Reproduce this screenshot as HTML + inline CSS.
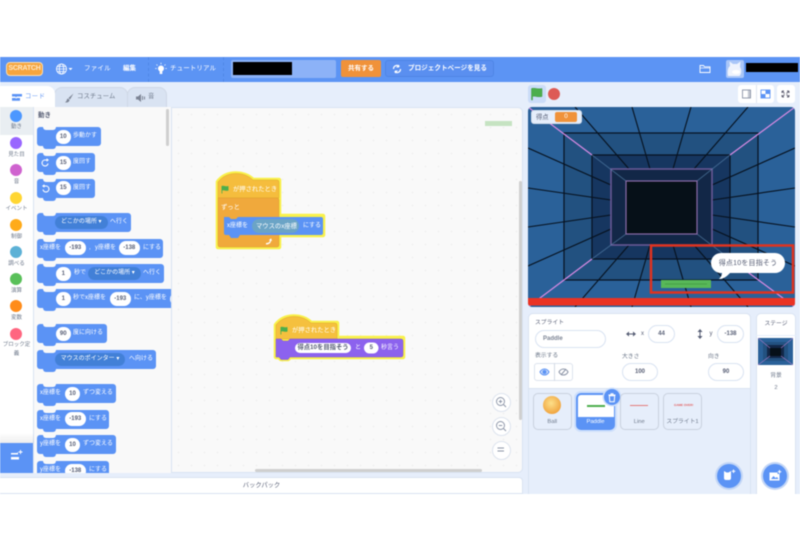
<!DOCTYPE html>
<html lang="ja"><head><meta charset="utf-8"><title>Scratch</title>
<style>
html,body{margin:0;padding:0;width:800px;height:550px;overflow:hidden;background:#fff}
#r{position:relative;width:800px;height:550px;overflow:hidden;font-family:"Liberation Sans","Noto Sans CJK JP",sans-serif;font-size:6px;filter:blur(.5px)}
#r div,#r span.a{position:absolute;box-sizing:border-box}
#r svg{position:absolute;overflow:visible}
.x{color:#fff;height:19px;line-height:19px;white-space:nowrap}
.g{color:#6f7a8c;white-space:nowrap;line-height:9px;height:9px}
.c{text-align:center}
.b{background:#5b93f5;border-radius:3px;height:19px}
.b::before{content:"";position:absolute;left:6px;top:0;width:13px;height:3px;background:#f9f9f9;border-radius:0 0 3px 3px}
.b::after{content:"";position:absolute;left:6px;bottom:-3px;width:13px;height:3px;background:#5b93f5;border-radius:0 0 4px 4px}
.o{background:#fff;color:#575e75;border-radius:7px;height:14px;line-height:14px;text-align:center;white-space:nowrap;font-weight:bold}
.d{background:#4280d7;color:#fff;border-radius:7px;height:13px;line-height:13px;text-align:center;white-space:nowrap}
.i{background:#fff;border:1px solid #d9e3f2;border-radius:9px;color:#575e75;text-align:center;line-height:16px;height:18px;font-weight:bold}
.dot{border-radius:50%;width:12px;height:12px;left:10px}
.s{background:#e6eefb;border:1px solid #c9d1de;border-radius:5px;top:393px;height:37px}
.rb{background:#fff;border:1.5px solid #dde3ee;border-radius:50%;width:19px;height:19px;left:491.5px}
</style></head><body><div id="r">
<!-- page bg -->
<div style="left:0;top:57px;width:800px;height:437px;background:#e6eefb"></div>
<!-- header -->
<div style="left:0;top:57px;width:800px;height:25px;background:#5c94f4"></div>
<div style="left:6px;top:62px;width:37px;height:14px;background:#f6a53e;border:1.5px solid #fcdcae;border-radius:4px;color:#ffe9c8;font-weight:bold;font-size:7px;line-height:11px;text-align:center;letter-spacing:-.2px">SCRATCH</div>
<svg style="left:56px;top:63px" width="20" height="12" viewBox="0 0 20 12"><g fill="none" stroke="#fff" stroke-width=".8"><circle cx="5.500" cy="6" r="5"/><ellipse cx="5.500" cy="6" rx="2.200" ry="5"/><path d="M.5 6h10M1.200 3.500h8.600M1.200 8.500h8.600"/></g><path d="M12.500 5h4l-2 2.200z" fill="#fff"/></svg>
<div class="x" style="left:84px;top:59px;font-size:6.500px;letter-spacing:.2px">ファイル</div>
<div class="x" style="left:123px;top:59px;font-size:6.500px;font-weight:bold">編集</div>
<div style="left:148px;top:57px;width:0;height:25px;border-left:1px dashed #4f87e6"></div>
<div style="left:223px;top:57px;width:0;height:25px;border-left:1px dashed #4f87e6"></div>
<svg style="left:155px;top:62px" width="12" height="14" viewBox="0 0 12 14"><circle cx="6" cy="6.500" r="3" fill="#fff"/><rect x="4.700" y="9" width="2.600" height="3" fill="#fff"/><path d="M6 .8v1.400M1.500 2.500l1 1M10.500 2.500l-1 1M.2 6.500h1.500M10.300 6.500h1.500" stroke="#fff" stroke-width=".8"/></svg>
<div class="x" style="left:170px;top:59px;font-size:6.500px;letter-spacing:.1px">チュートリアル</div>
<div style="left:231px;top:60px;width:105px;height:18px;background:#8cb2f7;border-radius:2px"></div>
<div style="left:233px;top:61.500px;width:59px;height:13px;background:#000"></div>
<div style="left:341px;top:60px;width:40px;height:17px;background:#f0923a;border-radius:2px;color:#fff;text-align:center;line-height:17px;font-size:6.500px;font-weight:bold">共有する</div>
<div style="left:385px;top:60px;width:109px;height:17px;background:#5a8ff0;border:1px solid #4f86e6;border-radius:3px;color:#fff;line-height:15px;font-size:6.600px;padding-left:22px;white-space:nowrap;font-weight:bold">プロジェクトページを見る</div>
<svg style="left:392px;top:64px" width="10" height="10" viewBox="0 0 10 10"><path d="M1.500 5a3.500 3.500 0 0 1 6-2.500M8.500 5a3.500 3.500 0 0 1-6 2.500" fill="none" stroke="#fff" stroke-width="1.200"/><path d="M7 .5v3h-3zM3 9.500v-3h3z" fill="#fff"/></svg>
<svg style="left:699px;top:64px" width="12" height="10" viewBox="0 0 12 10"><path d="M1 8.500V1.500h3.500l1 1.300H11v5.700z" fill="none" stroke="#fff" stroke-width=".9"/><path d="M1 4h10" stroke="#fff" stroke-width=".7"/></svg>
<div style="left:726px;top:60px;width:18px;height:18px;background:#a9c6f8;border-radius:2px"></div>
<svg style="left:726px;top:60px" width="18" height="18" viewBox="0 0 18 18"><path d="M2 16C1 10 2.500 7 4 6L3.500 1.500 7 4h4l3.500-2.500L14 7c2 3 1.500 7-.5 9z" fill="#eef3fd"/><ellipse cx="10" cy="12" rx="4" ry="2" fill="#fff"/></svg>
<div style="left:746px;top:63px;width:52px;height:9px;background:#000"></div>

<!-- tabs -->
<div style="left:54px;top:87px;width:74px;height:20px;background:#d9e3f2;border:1px solid #cfd8e6;border-bottom:0;border-radius:8px 8px 0 0"></div>
<div style="left:127px;top:87px;width:40px;height:20px;background:#d9e3f2;border:1px solid #cfd8e6;border-bottom:0;border-radius:8px 8px 0 0"></div>
<div style="left:0;top:86px;width:55px;height:22px;background:#fff;border-radius:0 8px 0 0"></div>
<svg style="left:12px;top:94px" width="10" height="7" viewBox="0 0 10 7"><path d="M0 0h10v2.500H5L4 3.300 3 2.500H0zM0 4h3.500l.7.700.8-.7H8v2.800H0z" fill="#5b93f5"/></svg>
<div class="g" style="left:25px;top:92px;color:#6a9cf5;font-size:6.300px;letter-spacing:.5px">コード</div>
<svg style="left:65px;top:93px" width="9" height="10" viewBox="0 0 9 10"><path d="M8.500.5 3.500 5 5 6.500zM3 5.500C1.500 6 2.200 8 0 9.500c3 .3 4.500-1 4.500-2.500z" fill="#7d8595"/></svg>
<div class="g" style="left:77px;top:92px;font-size:6.300px;letter-spacing:.15px">コスチューム</div>
<svg style="left:136px;top:94px" width="10" height="8" viewBox="0 0 10 8"><path d="M0 2.500h2L5 0v8L2 5.500H0z" fill="#7d8595"/><path d="M6.500 2v4M8.500 2.500v3" stroke="#7d8595" stroke-width="1"/></svg>
<div class="g" style="left:148px;top:92px;font-size:6.300px">音</div>

<!-- category column -->
<div style="left:0;top:107px;width:34px;height:366px;background:#fff;border-right:1px solid #d9e3f2"></div>
<div style="left:0;top:107px;width:33px;height:28px;background:#e9eef2"></div>
<div class="dot" style="top:110px;background:#4c97ff"></div><div class="g c" style="left:0;width:33px;top:122.500px;font-size:5.500px">動き</div>
<div class="dot" style="top:137px;background:#9966ff"></div><div class="g c" style="left:0;width:33px;top:150.500px;font-size:5.500px">見た目</div>
<div class="dot" style="top:164px;background:#cf63cf"></div><div class="g c" style="left:0;width:33px;top:177.500px;font-size:5.500px">音</div>
<div class="dot" style="top:191.500px;background:#ffd633"></div><div class="g c" style="left:0;width:33px;top:204.500px;font-size:5.500px">イベント</div>
<div class="dot" style="top:219px;background:#ffab19"></div><div class="g c" style="left:0;width:33px;top:232.500px;font-size:5.500px">制御</div>
<div class="dot" style="top:246px;background:#5cb1d6"></div><div class="g c" style="left:0;width:33px;top:259.500px;font-size:5.500px">調べる</div>
<div class="dot" style="top:273px;background:#59c059"></div><div class="g c" style="left:0;width:33px;top:286.500px;font-size:5.500px">演算</div>
<div class="dot" style="top:300px;background:#ff8c1a"></div><div class="g c" style="left:0;width:33px;top:313.500px;font-size:5.500px">変数</div>
<div class="dot" style="top:328px;background:#ff6680"></div><div class="g c" style="left:0;width:33px;top:340.500px;font-size:5.500px">ブロック定</div><div class="g c" style="left:0;width:33px;top:349.500px;font-size:5.500px">義</div>
<div style="left:0;top:433px;width:34px;height:10px;background:linear-gradient(rgba(0,0,0,0),rgba(0,0,0,.07))"></div>
<div style="left:0;top:443px;width:33px;height:30px;background:#5b93f5"></div>
<svg style="left:9px;top:449px" width="15" height="14" viewBox="0 0 15 14"><path d="M2 4h6l1-1v2.500H2zM2 8h8v2.500H2z" fill="#fff"/><path d="M11.500 1v4M9.500 3h4" stroke="#fff" stroke-width="1"/></svg>

<!-- palette background -->
<div style="left:34px;top:107px;width:138px;height:366px;background:#f9f9f9;border-right:1px solid #d9e3f2"></div>
<div style="left:166px;top:109px;width:3px;height:37px;background:#cfcfcf;border-radius:2px"></div>

<!-- workspace -->
<div style="left:172px;top:107px;width:351px;height:366px;background-color:#f9f9f9;background-image:radial-gradient(circle,#e9e9e9 .6px,transparent .8px);background-size:13px 13px;border:1px solid #d9e3f2;border-left:0;border-radius:0 5px 5px 0"></div>
<div style="left:485px;top:121px;width:27px;height:4.500px;background:#c6e3c2"></div>
<div style="left:518.500px;top:181px;width:3px;height:239px;background:#cfcfcf;border-radius:2px"></div>
<div style="left:255px;top:468.500px;width:227px;height:3px;background:#cfcfcf;border-radius:2px"></div>
<div class="rb" style="top:392.500px"></div><div class="rb" style="top:416.500px"></div><div class="rb" style="top:440.500px"></div>
<svg style="left:491px;top:392px" width="20" height="68" viewBox="0 0 20 68" fill="none" stroke="#8a93a6" stroke-width=".9"><circle cx="9.500" cy="9.500" r="4"/><path d="M12.500 12.500l2.500 2.500M7.800 9.500h3.400M9.500 7.800v3.400"/><circle cx="9.500" cy="33.500" r="4"/><path d="M12.500 36.500l2.500 2.500M7.800 33.500h3.400"/><path d="M6.500 56h6.500M6.500 59h6.500" stroke-width="1.100"/></svg>

<!-- palette blocks (clipped) -->
<div style="left:34px;top:107px;width:137px;height:366px;overflow:hidden">
<div style="left:-34px;top:-107px;width:800px;height:550px">
<div class="g" style="left:38px;top:111px;color:#575e75;font-weight:bold;font-size:6.500px">動き</div>

<div class="b" style="left:37px;top:127px;width:63.500px"></div>
<div class="o" style="left:56px;top:129.500px;width:14.500px">10</div><div class="x" style="left:73px;top:127px">歩動かす</div>

<div class="b" style="left:37px;top:153px;width:57.500px"></div>
<svg style="left:41px;top:158px" width="9" height="9" viewBox="0 0 9 9"><path d="M7 5.500A3 3 0 1 1 4 2h2" fill="none" stroke="#fff" stroke-width="1.100"/><path d="M5.500 .3 8 2 5.500 3.700z" fill="#fff"/></svg>
<div class="o" style="left:56px;top:155.500px;width:14.500px">15</div><div class="x" style="left:73px;top:153px">度回す</div>

<div class="b" style="left:37px;top:178.500px;width:57.500px"></div>
<svg style="left:41px;top:183.500px" width="9" height="9" viewBox="0 0 9 9"><path d="M2 5.500A3 3 0 1 0 5 2H3" fill="none" stroke="#fff" stroke-width="1.100"/><path d="M3.500 .3 1 2l2.500 1.700z" fill="#fff"/></svg>
<div class="o" style="left:56px;top:181px;width:14.500px">15</div><div class="x" style="left:73px;top:178.500px">度回す</div>

<div class="b" style="left:37px;top:213px;width:94px"></div>
<div class="d" style="left:55px;top:216px;width:52.500px">どこかの場所 ▾</div><div class="x" style="left:110px;top:213px">へ行く</div>

<div class="b" style="left:37px;top:238.500px;width:126px"></div>
<div class="x" style="left:40px;top:238.500px">x座標を</div><div class="o" style="left:65px;top:241px;width:20.500px">-193</div><div class="x" style="left:89px;top:238.500px">,</div><div class="x" style="left:95px;top:238.500px">y座標を</div><div class="o" style="left:119px;top:241px;width:20.500px">-138</div><div class="x" style="left:143px;top:238.500px">にする</div>

<div class="b" style="left:37px;top:264px;width:127px"></div>
<div class="o" style="left:56px;top:266.500px;width:14.500px">1</div><div class="x" style="left:74px;top:264px">秒で</div><div class="d" style="left:88px;top:267px;width:53px">どこかの場所 ▾</div><div class="x" style="left:143px;top:264px">へ行く</div>

<div class="b" style="left:37px;top:289px;width:140px"></div>
<div class="o" style="left:56px;top:292px;width:14.500px">1</div><div class="x" style="left:73px;top:289px">秒でx座標を</div><div class="o" style="left:110px;top:292px;width:20.500px">-193</div><div class="x" style="left:134px;top:289px">に、y座標を</div><div class="o" style="left:170px;top:292px;width:20px"></div>

<div class="b" style="left:37px;top:324px;width:70px"></div>
<div class="o" style="left:56px;top:326.500px;width:14.500px">90</div><div class="x" style="left:73px;top:324px">度に向ける</div>

<div class="b" style="left:37px;top:349.500px;width:118.500px"></div>
<div class="d" style="left:55px;top:352.500px;width:70px">マウスのポインター ▾</div><div class="x" style="left:129px;top:349.500px">へ向ける</div>

<div class="b" style="left:37px;top:384px;width:79px"></div>
<div class="x" style="left:40px;top:384px">x座標を</div><div class="o" style="left:65px;top:386.500px;width:15px">10</div><div class="x" style="left:83px;top:384px">ずつ変える</div>

<div class="b" style="left:37px;top:409.500px;width:72px"></div>
<div class="x" style="left:40px;top:409.500px">x座標を</div><div class="o" style="left:65px;top:412px;width:20.500px">-193</div><div class="x" style="left:89px;top:409.500px">にする</div>

<div class="b" style="left:37px;top:435px;width:79px"></div>
<div class="x" style="left:40px;top:435px">y座標を</div><div class="o" style="left:65px;top:437.500px;width:15px">10</div><div class="x" style="left:83px;top:435px">ずつ変える</div>

<div class="b" style="left:37px;top:461px;width:72px"></div>
<div class="x" style="left:40px;top:461px">y座標を</div><div class="o" style="left:65px;top:463.500px;width:20.500px">-138</div><div class="x" style="left:89px;top:461px">にする</div>
</div></div>

<!-- scripts -->
<svg style="left:0;top:0" width="800" height="550" viewBox="0 0 800 550">
<g fill="#f9f14a" stroke="#f9f14a" stroke-width="4.500" stroke-linejoin="round">
<path d="M218 182C226 171 244 171 253 180H279V216H323V235H279V247H218Z"/>
<path d="M276 325C284 314 302 314 311 323H337V338H403V357H290L288 359H281L279 357H276Z"/>
</g>
<path d="M218 182C226 171 244 171 253 180H277Q279 180 279 182V198H218Z" fill="#f5bd3d" stroke="#dfa52f" stroke-width=".5"/>
<path d="M218 198H277Q279 198 279 200V245Q279 247 277 247H220Q218 247 218 245Z" fill="#f0a93c" stroke="#dd9a30" stroke-width=".5"/>
<path d="M224 217H229L231 219H236L238 217H321Q323 217 323 219V233Q323 235 321 235H240L238 238H231L229 235H226Q224 235 224 233Z" fill="#5b93f5"/>
<rect x="252" y="219" width="47" height="14" rx="7" fill="#6ba4c6"/>
<path d="M266 243c2 0 3.500-.5 4-2.500l-1.200-.2 2.300-2 .9 2.700-1-.3c-.2 2.700-2.500 3.800-5 3.800z" fill="#fff"/>
<path d="M276 325C284 314 302 314 311 323H335Q337 323 337 325V339H276Z" fill="#f5c03e" stroke="#dfa52f" stroke-width=".5"/>
<path d="M276 339H281L283 341H288L290 339H401Q403 339 403 341V355Q403 357 401 357H290L288 359.500H281L279 357H276Z" fill="#8c62ee" stroke="#7a52d8" stroke-width=".5"/>
<path d="M221.500 193.500V186c2-1 4 1 7 0v4.500c-3 1-5-1-6.200 0v3z" fill="#4cae4c"/>
<path d="M280.500 334.500V327c2-1 4 1 7 0v4.500c-3 1-5-1-6.200 0v3z" fill="#4cae4c"/>
<rect x="295" y="343" width="56" height="10" rx="5" fill="#fff"/>
<rect x="364" y="342.500" width="14.500" height="11" rx="5.500" fill="#fff"/>
</svg>
<div class="x" style="left:233px;top:179.500px;font-size:6.300px">が押されたとき</div>
<div class="x" style="left:221px;top:197.500px;font-size:6.300px">ずっと</div>
<div class="x" style="left:227px;top:216.500px">x座標を</div>
<div class="x" style="left:256px;top:216.500px;font-size:6.300px">マウスのx座標</div>
<div class="x" style="left:303px;top:216.500px">にする</div>
<div class="x" style="left:292px;top:320.500px;font-size:6.300px">が押されたとき</div>
<div class="o" style="left:295px;top:341px;width:56px;background:transparent;font-size:6.300px">得点10を目指そう</div>
<div class="x" style="left:355px;top:338.500px">と</div>
<div class="o" style="left:364px;top:341px;width:14.500px;background:transparent">5</div>
<div class="x" style="left:381px;top:338.500px">秒言う</div>

<!-- backpack -->
<div style="left:0;top:477px;width:523px;height:17px;background:#fff;border:1px solid #d9e3f2;border-left:0;border-radius:0 4px 0 0"></div>
<div class="g c" style="left:0;top:481px;width:523px;color:#575e75;font-size:6.300px">バックパック</div>

<!-- stage controls -->
<div style="left:527.500px;top:85px;width:18px;height:18px;background:#cbdcf8;border-radius:3px"></div>
<svg style="left:530px;top:87px" width="14" height="14" viewBox="0 0 14 14"><path d="M1.500 13V1.500c3-1 6 1 10.500 0v8c-4.500 1-7.500-1-9.500 0V13z" fill="#4cae4c" stroke="#3f9a3f" stroke-width=".5"/></svg>
<div style="left:548px;top:88px;width:12px;height:12px;background:#dd5b55;border-radius:50%"></div>
<div style="left:738px;top:85px;width:36px;height:18px;background:#fff;border-radius:3px"></div>
<div style="left:777px;top:85px;width:18px;height:18px;background:#fff;border-radius:3px"></div>
<div style="left:756px;top:85px;width:1px;height:18px;background:#e0e6f0"></div>
<svg style="left:738px;top:85px" width="58" height="18" viewBox="0 0 58 18"><rect x="4.500" y="5" width="8" height="8" fill="none" stroke="#8a93a6" stroke-width=".9"/><rect x="9.800" y="5" width="2.700" height="8" fill="#8a93a6" opacity=".5"/><rect x="23" y="5" width="9" height="8" fill="#fff" stroke="#5b93f5" stroke-width=".9"/><rect x="23" y="9" width="4.500" height="4" fill="#5b93f5"/><rect x="27.500" y="5" width="4.500" height="4" fill="#5b93f5"/><path d="M44 6l2.500 2.500M51 6l-2.500 2.500M44 12l2.500-2.500M51 12l-2.500-2.500M44 6h2M44 6v2M51 6h-2M51 6v2M44 12h2M44 12v-2M51 12h-2M51 12v-2" stroke="#667" stroke-width="1" fill="none"/></svg>

<!-- stage -->
<svg style="left:528px;top:107px;overflow:hidden;border-radius:4px" width="267" height="200" viewBox="528 107 267 200">
<rect x="528" y="107" width="267" height="200" fill="#2a6199"/>
<rect x="564" y="133" width="194" height="147" fill="#225180"/>
<rect x="592" y="155" width="138" height="104" fill="#163660"/>
<rect x="611" y="169" width="101" height="76" fill="#122747"/>
<g stroke="#06101c" stroke-width="1.100" fill="none">
<path d="M575 107 629 169M632 107 650 169M691 107 673 169M748 107 694 169"/>
<path d="M575 307 629 245M632 307 650 245M691 307 673 245M748 307 694 245"/>
<path d="M528 148 611 185M528 188 611 200M528 227 611 215M528 266 611 229"/>
<path d="M795 148 712 185M795 188 712 200M795 227 712 215M795 266 712 229"/>
</g>
<rect x="564" y="133" width="194" height="147" fill="none" stroke="#07111f" stroke-width="1.200"/>
<rect x="592" y="155" width="138" height="104" fill="none" stroke="#07111f" stroke-width="1.200"/>
<rect x="611" y="169" width="101" height="76" fill="none" stroke="#6c5a98" stroke-width="1.500"/>
<g stroke="#d98be4" stroke-width="1.200"><path d="M528 107 592 155M795 107 730 155M528 307 592 259M795 307 730 259"/></g>
<g stroke="#5a87b0" stroke-width="1"><path d="M592 155 626 181M730 155 697 181M592 259 626 234M730 259 697 234" opacity=".6"/></g>
<rect x="626" y="181" width="71" height="53" fill="#061018" stroke="#8a6ca8" stroke-width="1.200"/>
<rect x="661" y="280" width="50" height="8" fill="#58b858"/>
<path d="M665 284h42" stroke="#3f983f" stroke-width=".8"/>
<rect x="528" y="298" width="267" height="7.500" fill="#ea3323"/>
<rect x="651" y="245.500" width="142" height="47" fill="none" stroke="#e0331f" stroke-width="2.500"/>
<path d="M721 253H775A10 10 0 0 1 775 273H730C727 276 724 279 719 279C721 277 722 275 722 273H721A10 10 0 0 1 721 253Z" fill="#fff"/>
</svg>
<div class="g c" style="left:711px;top:258.500px;width:74px;font-size:7px;letter-spacing:.2px;color:#575e75">得点10を目指そう</div>
<div style="left:531px;top:110px;width:51px;height:14px;background:#e6eefb;border:1px solid #d5deec;border-radius:3px"></div>
<div class="g" style="left:536px;top:112.500px;color:#575e75;font-size:6.300px">得点</div>
<div style="left:555px;top:112px;width:22px;height:10px;background:#f0923a;border-radius:2px;color:#fff;text-align:center;line-height:10px;font-size:6.300px">0</div>

<!-- sprite panel -->
<div style="left:528px;top:313px;width:223px;height:181px;background:#e6eefb;border:1px solid #d9e3f2;border-bottom:0;border-radius:5px 5px 0 0"></div>
<div style="left:528px;top:313px;width:223px;height:75.500px;background:#fff;border:1px solid #d9e3f2;border-radius:5px 5px 0 0"></div>
<div class="g" style="left:535px;top:319px;color:#575e75;font-size:5.800px">スプライト</div>
<div class="i" style="left:535px;top:330px;width:71px;text-align:left;padding-left:7px;font-weight:bold;color:#7d8595;font-size:6px">Paddle</div>
<svg style="left:626px;top:331px" width="10" height="6" viewBox="0 0 10 6"><path d="M1.500 3h7" stroke="#575e75" stroke-width="1"/><path d="M0 3l3-2.500v5zM10 3 7 .5v5z" fill="#575e75"/></svg>
<div class="g" style="left:641px;top:330px;font-size:6px;color:#575e75">x</div>
<div class="i" style="left:648px;top:325px;width:27px">44</div>
<svg style="left:697px;top:329px" width="6" height="10" viewBox="0 0 6 10"><path d="M3 1.500v7" stroke="#575e75" stroke-width="1"/><path d="M3 0 .5 3h5zM3 10 .5 7h5z" fill="#575e75"/></svg>
<div class="g" style="left:709.500px;top:330px;font-size:6px;color:#575e75">y</div>
<div class="i" style="left:717px;top:325px;width:27px">-138</div>
<div class="g" style="left:535px;top:352px;font-size:5.800px">表示する</div>
<div style="left:534px;top:363px;width:39px;height:18px;background:#fff;border:1px solid #dde3ee;border-radius:3px"></div>
<div style="left:553.500px;top:363px;width:1px;height:18px;background:#d5dbe6"></div>
<svg style="left:538px;top:367px" width="32" height="10" viewBox="0 0 32 10"><path d="M2 5c2-4 7-4 9 0-2 4-7 4-9 0z" fill="#cddcf8" stroke="#5b93f5"/><circle cx="6.500" cy="5" r="2" fill="#5b93f5"/><path d="M21 5c2-4 7-4 9 0-2 4-7 4-9 0zM23 8l5-6" fill="none" stroke="#8a93a6"/></svg>
<div class="g" style="left:622px;top:353px;font-size:5.800px">大きさ</div>
<div class="i" style="left:622px;top:363px;width:36px">100</div>
<div class="g" style="left:708px;top:353px;font-size:5.800px">向き</div>
<div class="i" style="left:708px;top:363px;width:36px">90</div>

<!-- sprite tiles -->
<div class="s" style="left:533px;width:38.500px;background:#e6eefb"></div>
<svg style="left:543px;top:396px" width="18" height="18" viewBox="0 0 18 18"><defs><radialGradient id="bl" cx=".45" cy=".4" r=".7"><stop offset="0" stop-color="#fde08a"/><stop offset="1" stop-color="#ee9a33"/></radialGradient></defs><circle cx="9" cy="9" r="9" fill="url(#bl)"/></svg>
<div class="g c" style="left:533px;top:417.500px;width:38.500px;font-size:5.800px">Ball</div>

<div style="left:574px;top:391px;width:42.500px;height:41px;background:#cfe0fb;border-radius:7px"></div>
<div style="left:576px;top:393px;width:39px;height:37px;background:#5b93f5;border-radius:5px"></div>
<div style="left:577.500px;top:394.500px;width:36px;height:22px;background:#fff;border-radius:3px 3px 0 0"></div>
<div style="left:586.500px;top:404.500px;width:18.500px;height:2.500px;background:#4cae4c"></div>
<div class="x c" style="left:576px;top:413px;width:39px;font-size:5.800px">Paddle</div>
<div style="left:604px;top:389px;width:16px;height:16px;background:#5b93f5;border-radius:50%;box-shadow:0 0 0 1.500px #cfe0fb"></div>
<svg style="left:608px;top:392.500px" width="8" height="9" viewBox="0 0 8 9"><path d="M.5 2h7M3 2V.7h2V2M1.300 2.700h5.400l-.5 6H1.800z" fill="none" stroke="#fff" stroke-width="1"/></svg>

<div class="s" style="left:620px;width:38.500px"></div>
<div style="left:630px;top:404.800px;width:18px;height:1px;background:#e27b7b"></div>
<div class="g c" style="left:620px;top:417.500px;width:38.500px;font-size:5.800px">Line</div>

<div class="s" style="left:663px;width:39px"></div>
<div class="a" style="position:absolute;left:674px;top:403px;width:18px;height:5px;line-height:5px;color:#e25a5a;font-size:6px;transform:scale(.5);transform-origin:0 50%;white-space:nowrap;font-weight:bold">GAME OVER!</div>
<div class="g c" style="left:663px;top:417.500px;width:39px;font-size:5.800px">スプライト1</div>

<!-- add sprite -->
<div style="left:715px;top:462px;width:28px;height:28px;background:#c3d6f6;border-radius:50%"></div>
<div style="left:717px;top:464px;width:24px;height:24px;background:#5b93f5;border-radius:50%"></div>
<svg style="left:723px;top:469px" width="13" height="12" viewBox="0 0 13 12"><path d="M1 2l2.500 1.500h2L8 2v7a2 2 0 0 1-2 2H3a2 2 0 0 1-2-2z" fill="#fff"/><path d="M10.500 .5v3.500M8.800 2.200h3.500" stroke="#fff"/></svg>

<!-- stage panel -->
<div style="left:756px;top:313px;width:40px;height:181px;background:#fff;border:1px solid #d9e3f2;border-bottom:0;border-radius:5px 5px 0 0"></div>
<div class="g c" style="left:756px;top:320px;width:40px;font-size:5.800px;color:#575e75">ステージ</div>
<div style="left:756px;top:335px;width:40px;height:1px;background:#e6eefb"></div>
<svg style="left:758px;top:338px" width="35" height="27" viewBox="0 0 35 27"><rect width="35" height="27" fill="#2a6199"/><rect x="5" y="4" width="25" height="19" fill="#225180"/><rect x="9" y="7" width="17" height="13" fill="#122747"/><rect x="12" y="10" width="11" height="8" fill="#061018"/><path d="M0 0 12 10M35 0 23 10M0 27 12 18M35 27 23 18" stroke="#a87cc8" stroke-width=".6"/></svg>
<div class="g c" style="left:756px;top:372px;width:40px;font-size:5.800px">背景</div>
<div class="g c" style="left:756px;top:384px;width:40px;font-size:5.800px">2</div>
<div style="left:761px;top:462px;width:28px;height:28px;background:#c3d6f6;border-radius:50%"></div>
<div style="left:763px;top:464px;width:24px;height:24px;background:#5b93f5;border-radius:50%"></div>
<svg style="left:769px;top:470px" width="13" height="11" viewBox="0 0 13 11"><path d="M.5 2.500h8v1.500h2v6.500H.5z" fill="#fff"/><path d="M2 9l2.500-3 2 2 1.500-1 1.500 2z" fill="#5b93f5"/><path d="M10.500 0v3.500M8.800 1.700h3.500" stroke="#fff"/></svg>
</div></body></html>
